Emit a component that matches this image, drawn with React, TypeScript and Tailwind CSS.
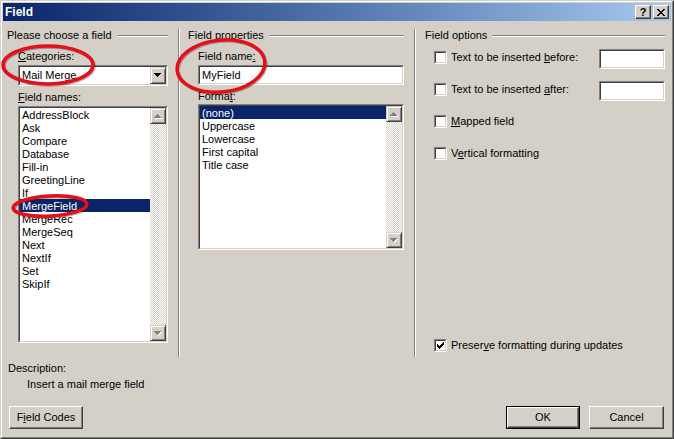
import React from "react";

type Kids = { children?: React.ReactNode; className?: string };

const Sunken = ({ children, className = "", inner = "" }: Kids & { inner?: string }) => (
  <div className={`border border-t-[#808080] border-l-[#808080] border-r-white border-b-white ${className}`}>
    <div className={`h-full w-full border border-t-[#404040] border-l-[#404040] border-r-[#d4d0c8] border-b-[#d4d0c8] bg-white ${inner}`}>
      {children}
    </div>
  </div>
);

const Arrow = ({ dir, disabled }: { dir: "up" | "down"; disabled?: boolean }) => {
  const up = "M3 0h1v1h-1z M2 1h3v1h-3z M1 2h5v1h-5z M0 3h7v1h-7z";
  const down = "M0 0h7v1h-7z M1 1h5v1h-5z M2 2h3v1h-3z M3 3h1v1h-1z";
  const d = dir === "up" ? up : down;
  return (
    <svg width="8" height="5" viewBox="0 0 8 5" shapeRendering="crispEdges">
      {disabled && <path d={d} fill="#ffffff" transform="translate(1,1)" />}
      <path d={d} fill={disabled ? "#808080" : "#000000"} />
    </svg>
  );
};

const ScrollBtn = ({ dir, disabled = true, className = "" }: { dir: "up" | "down"; disabled?: boolean; className?: string }) => (
  <div
    className={`w-[16px] h-[16px] shrink-0 bg-[#d4d0c8] border border-t-[#d4d0c8] border-l-[#d4d0c8] border-r-[#404040] border-b-[#404040] shadow-[inset_1px_1px_#ffffff,inset_-1px_-1px_#808080] flex items-center justify-center ${className}`}
  >
    <Arrow dir={dir} disabled={disabled} />
  </div>
);

const ListBox = ({ items, selected, className = "" }: { items: string[]; selected: number; className?: string }) => (
  <Sunken className={className} inner="flex">
    <div className="flex-1 flex flex-col">
      {items.map((it, i) => (
        <div
          key={it}
          className={`h-[13px] leading-[14px] pl-[2px] whitespace-nowrap ${i === selected ? "bg-[#0a246a] text-white" : ""}`}
        >
          {it}
        </div>
      ))}
    </div>
    <div className="w-[16px] flex flex-col">
      <ScrollBtn dir="up" />
      <div className="flex-1 bg-[image:repeating-conic-gradient(#d4d0c8_0%_25%,#ffffff_0%_50%)] bg-[length:2px_2px]" />
      <ScrollBtn dir="down" />
    </div>
  </Sunken>
);

const GroupHeader = ({ title, className = "" }: { title: string; className?: string }) => (
  <div className={`flex items-center h-[13px] ${className}`}>
    <span className="whitespace-nowrap">{title}</span>
    <div className="flex-1 ml-[5px] h-0 border-t border-t-[#808080] border-b border-b-white" />
  </div>
);

const Check = ({ checked }: { checked?: boolean }) => (
  <div className="w-[13px] h-[13px] shrink-0 border border-t-[#808080] border-l-[#808080] border-r-white border-b-white">
    <div className="w-full h-full border border-t-[#404040] border-l-[#404040] border-r-[#d4d0c8] border-b-[#d4d0c8] bg-white flex items-center justify-center">
      {checked && (
        <svg width="7" height="7" viewBox="0 0 7 7" shapeRendering="crispEdges">
          <path
            d="M0 2h1v3h-1z M1 3h1v3h-1z M2 4h1v3h-1z M3 3h1v3h-1z M4 2h1v3h-1z M5 1h1v3h-1z M6 0h1v3h-1z"
            fill="#000000"
          />
        </svg>
      )}
    </div>
  </div>
);

const PushBtn = ({ children, className = "", def }: Kids & { def?: boolean }) =>
  def ? (
    <div className={`border border-black ${className}`}>
      <div className="h-full w-full border border-t-white border-l-white border-r-[#404040] border-b-[#404040] shadow-[inset_-1px_-1px_#808080] flex items-center justify-center">
        {children}
      </div>
    </div>
  ) : (
    <div
      className={`border border-t-white border-l-white border-r-[#404040] border-b-[#404040] shadow-[inset_-1px_-1px_#808080] flex items-center justify-center ${className}`}
    >
      {children}
    </div>
  );

const CaptionBtn = ({ children }: Kids) => (
  <div className="w-[16px] h-[14px] bg-[#d4d0c8] border border-t-white border-l-white border-r-[#404040] border-b-[#404040] shadow-[inset_-1px_-1px_#808080] flex items-center justify-center">
    {children}
  </div>
);

const CheckRow = ({ label, checked, box, className = "" }: { label: React.ReactNode; checked?: boolean; box?: boolean; className?: string }) => (
  <div className={`flex items-start h-[20px] ${className}`}>
    <div className="mt-[2px]">
      <Check checked={checked} />
    </div>
    <div className="ml-[4px] mt-[2px] whitespace-nowrap h-[13px] leading-[13px]">{label}</div>
    {box && <Sunken className="ml-auto w-[66px] h-[20px]" />}
  </div>
);

export default function App() {
  const fields = [
    "AddressBlock",
    "Ask",
    "Compare",
    "Database",
    "Fill-in",
    "GreetingLine",
    "If",
    "MergeField",
    "MergeRec",
    "MergeSeq",
    "Next",
    "NextIf",
    "Set",
    "SkipIf",
  ];
  const formats = ["(none)", "Uppercase", "Lowercase", "First capital", "Title case"];

  return (
    <div className="relative w-[674px] h-[439px] overflow-hidden bg-[#d4d0c8] font-['Liberation_Sans',Arial,sans-serif] text-[11px] leading-[13px] text-black">
      <div className="w-full h-full border border-t-[#d4d0c8] border-l-[#d4d0c8] border-r-[#404040] border-b-[#404040]">
        <div className="w-full h-full border border-t-white border-l-white border-r-[#808080] border-b-[#808080] p-[1px] flex flex-col">
          {/* Title bar */}
          <div className="h-[18px] shrink-0 flex items-center bg-linear-to-r from-[#0a246a] to-[#a6caf0] pl-[2px] pr-[2px]">
            <span className="font-bold text-white text-[12px]">Field</span>
            <div className="ml-auto flex gap-[2px]">
              <CaptionBtn>
                <span className="font-bold text-[11px] leading-[11px] text-black">?</span>
              </CaptionBtn>
              <CaptionBtn>
                <svg width="8" height="7" viewBox="0 0 8 7" shapeRendering="crispEdges">
                  <path
                    d="M0 0h2v1h-2z M6 0h2v1h-2z M1 1h2v1h-2z M5 1h2v1h-2z M2 2h4v1h-4z M3 3h2v1h-2z M2 4h4v1h-4z M1 5h2v1h-2z M5 5h2v1h-2z M0 6h2v1h-2z M6 6h2v1h-2z"
                    fill="#000000"
                  />
                </svg>
              </CaptionBtn>
            </div>
          </div>

          {/* Body */}
          <div className="flex-1 flex flex-col">
            <div className="mt-[8px] h-[328px] flex">
              {/* Column 1 */}
              <div className="w-[175px] flex flex-col">
                <GroupHeader title="Please choose a field" className="pl-[4px] pr-[10px]" />
                <div className="ml-[15px] mt-[8px]">
                  <u>C</u>ategories:
                </div>
                <Sunken className="ml-[15px] mt-[2px] w-[150px] h-[21px]" inner="flex items-center">
                  <span className="flex-1 pl-[2px]">Mail Merge</span>
                  <ScrollBtn dir="down" disabled={false} className="h-[17px]" />
                </Sunken>
                <div className="ml-[15px] mt-[5px]">
                  <u>F</u>ield names:
                </div>
                <ListBox items={fields} selected={7} className="ml-[15px] mt-[2px] w-[150px] h-[237px]" />
              </div>

              <div className="w-[2px] border-l border-l-[#808080] border-r border-r-white" />

              {/* Column 2 */}
              <div className="w-[234px] flex flex-col">
                <GroupHeader title="Field properties" className="pl-[8px] pr-[10px]" />
                <div className="ml-[18px] mt-[8px]">
                  Field name<u>:</u>
                </div>
                <Sunken className="ml-[18px] mt-[2px] w-[206px] h-[20px]" inner="flex items-center">
                  <span className="pl-[2px]">MyField</span>
                </Sunken>
                <div className="ml-[18px] mt-[5px]">
                  Forma<u>t</u>:
                </div>
                <ListBox items={formats} selected={0} className="ml-[18px] mt-[1px] w-[206px] h-[146px]" />
              </div>

              <div className="w-[2px] border-l border-l-[#808080] border-r border-r-white" />

              {/* Column 3 */}
              <div className="w-[255px] flex flex-col pr-[6px]">
                <GroupHeader title="Field options" className="pl-[9px]" />
                <CheckRow
                  className="ml-[18px] mt-[7px]"
                  box
                  label={
                    <>
                      Text to be inserted <u>b</u>efore:
                    </>
                  }
                />
                <CheckRow
                  className="ml-[18px] mt-[12px]"
                  box
                  label={
                    <>
                      Text to be inserted <u>a</u>fter:
                    </>
                  }
                />
                <CheckRow
                  className="ml-[18px] mt-[12px]"
                  label={
                    <>
                      <u>M</u>apped field
                    </>
                  }
                />
                <CheckRow
                  className="ml-[18px] mt-[12px]"
                  label={
                    <>
                      V<u>e</u>rtical formatting
                    </>
                  }
                />
                <CheckRow
                  className="ml-[18px] mt-auto"
                  checked
                  label={
                    <>
                      Preser<u>v</u>e formatting during updates
                    </>
                  }
                />
              </div>
            </div>

            {/* Description */}
            <div className="pl-[5px] mt-[5px]">Description:</div>
            <div className="pl-[24px] mt-[3px]">Insert a mail merge field</div>

            {/* Buttons */}
            <div className="mt-[15px] flex pl-[6px] pr-[7px]">
              <PushBtn className="w-[74px] h-[23px]">
                F<u>i</u>eld Codes
              </PushBtn>
              <PushBtn def className="ml-auto w-[74px] h-[23px]">
                OK
              </PushBtn>
              <PushBtn className="ml-[9px] w-[75px] h-[23px]">Cancel</PushBtn>
            </div>
          </div>
        </div>
      </div>

      {/* Red annotation ellipses */}
      <svg className="absolute inset-0 pointer-events-none" width="674" height="439" viewBox="0 0 674 439">
        <g fill="none" strokeWidth="3.5">
          <g stroke="rgba(90,0,0,0.35)" transform="translate(1,1)">
            <ellipse cx="48" cy="65" rx="45" ry="19" />
            <ellipse cx="221" cy="66" rx="44" ry="26" transform="rotate(-6 221 66)" />
            <ellipse cx="50" cy="206" rx="37" ry="10" transform="rotate(-3 50 206)" />
          </g>
          <g stroke="#e3101a">
            <ellipse cx="48" cy="65" rx="45" ry="19" />
            <ellipse cx="221" cy="66" rx="44" ry="26" transform="rotate(-6 221 66)" />
            <ellipse cx="50" cy="206" rx="37" ry="10" transform="rotate(-3 50 206)" />
          </g>
        </g>
      </svg>
    </div>
  );
}
